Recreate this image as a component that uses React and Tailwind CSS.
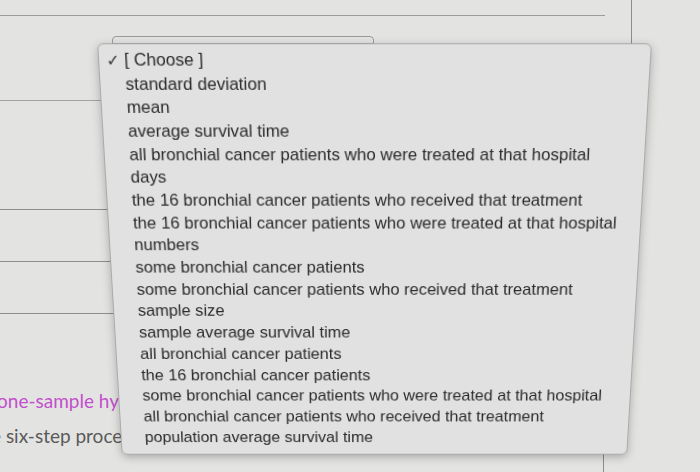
import React from 'react';

const options = [
  '[ Choose ]',
  'standard deviation',
  'mean',
  'average survival time',
  'all bronchial cancer patients who were treated at that hospital',
  'days',
  'the 16 bronchial cancer patients who received that treatment',
  'the 16 bronchial cancer patients who were treated at that hospital',
  'numbers',
  'some bronchial cancer patients',
  'some bronchial cancer patients who received that treatment',
  'sample size',
  'sample average survival time',
  'all bronchial cancer patients',
  'the 16 bronchial cancer patients',
  'some bronchial cancer patients who were treated at that hospital',
  'all bronchial cancer patients who received that treatment',
  'population average survival time',
];

export default function App() {
  return (
    <div className="relative w-[700px] h-[472px] overflow-hidden bg-[#e3e4e2] font-['Liberation_Sans',Arial,sans-serif]">
      {/* page behind the menu */}
      <div className="flex flex-col">
        <div className="flex flex-col w-[632px] h-[44px] border-r border-[#8c8c8c]">
          <div className="mt-[15px] w-[605px] border-t border-[#9c9c9c]" />
          <div className="mt-[20px] ml-[112px] w-[262px] h-[20px] border border-[#9a9a9a] rounded-t-[4px]" />
        </div>

        <div className="w-[120px] mt-[56px] h-[109px] border-t border-[#a3a3a3]" />
        <div className="w-[120px] h-[52px] border-t border-[#8e8e8e]" />
        <div className="w-[120px] h-[52px] border-t border-[#8e8e8e]" />
        <div className="w-[120px] border-t border-[#8e8e8e]" />

        <p className="mt-[75px] -ml-[3px] font-['Lato',sans-serif] text-[19px] leading-[24px] text-[#c24fcc] whitespace-nowrap">
          one-sample hypothesis test
        </p>
        <p className="mt-[11px] -ml-[9px] font-['Lato',sans-serif] text-[19px] leading-[24px] text-[#5a5a5a] whitespace-nowrap">
          e six-step process
        </p>
      </div>

      <div className="absolute left-[603px] top-[452px] h-[20px] border-l border-[#8c8c8c]" />

      {/* open select menu (photographed at a slight angle) */}
      <div className="absolute left-[110px] top-[48px] w-[529px] h-[421px] [transform:perspective(1000px)_rotateX(-12.8deg)] rounded-[6px] border border-[#a9aaa9] bg-[#e0e1e0] shadow-[0_3px_10px_rgba(0,0,0,0.25)] pt-[4px] pl-[7px]">
        {options.map((opt, i) => (
          <div key={i} className="flex items-center h-[22.7px] text-[16.6px] text-[#2a2a2a] whitespace-nowrap">
            <span className="w-[17px] text-[15px] font-bold font-['DejaVu_Sans',sans-serif]">{i === 0 ? '✓' : ''}</span>
            <span>{opt}</span>
          </div>
        ))}
      </div>
    </div>
  );
}
